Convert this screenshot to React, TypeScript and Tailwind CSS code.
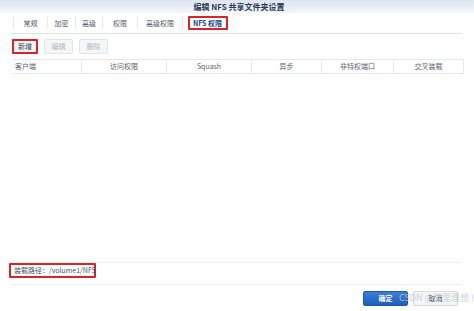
import React from 'react';

const tabs = [
  { label: '常规', w: 'w-[34px]' },
  { label: '加密', w: 'w-[28px]' },
  { label: '高级', w: 'w-[27px]' },
  { label: '权限', w: 'w-[35px]' },
  { label: '高级权限', w: 'w-[45px]' },
];

const cols = [
  { label: '客户端', w: 'w-[70px]', align: 'justify-start pl-[3px]' },
  { label: '访问权限', w: 'w-[85px]', align: 'justify-center' },
  { label: 'Squash', w: 'w-[85px]', align: 'justify-center' },
  { label: '异步', w: 'w-[70px]', align: 'justify-center' },
  { label: '非特权端口', w: 'w-[72px]', align: 'justify-center' },
  { label: '交叉装载', w: 'w-[70px]', align: 'justify-center' },
];

export default function App() {
  return (
    <div
      className="relative w-[474px] h-[311px] bg-white overflow-hidden flex flex-col"
      style={{ fontFamily: '"Noto Sans CJK SC", "Noto Sans", sans-serif' }}
    >
      {/* TITLE */}
      <div className="h-[13px] bg-gradient-to-b from-[#dde5ee] to-[#f3f6f9] flex items-center justify-center">
        <span className="text-[8px] font-bold text-[#2b3b58] leading-none ml-[4px]">编辑 NFS 共享文件夹设置</span>
      </div>

      {/* TABS */}
      <div className="ml-[10px] mr-[12px] h-[21px] border-b border-[#dfe2e7] flex items-center">
        <div className="w-[3px]" />
        {tabs.map(t => (
          <div key={t.label} className={`${t.w} h-[12px] border-l border-[#e6e8ec] flex items-center justify-center text-[7px] text-[#50596a]`}>
            {t.label}
          </div>
        ))}
        <div className="w-[50px] h-[14px] border-l border-[#e6e8ec] flex items-center justify-center">
          <div className="w-[40px] h-[14px] border-2 border-[#d6242c] rounded-[1px] flex items-center justify-center text-[7px] font-bold text-[#1d3f8a]">
            NFS 权限
          </div>
        </div>
      </div>

      {/* BUTTONS */}
      <div className="ml-[12px] mt-[5px] flex items-center gap-[6px]">
        <div className="w-[26px] h-[15px] border-2 border-[#d6242c] rounded-[1px] bg-[#f3f4f6] flex items-center justify-center text-[7px] text-[#3b4352]">
          新增
        </div>
        <div className="w-[29px] h-[15px] border border-[#e2e4e8] rounded-[2px] bg-[#f5f6f8] flex items-center justify-center text-[7px] text-[#b3b8c2]">
          编辑
        </div>
        <div className="w-[29px] h-[15px] border border-[#e2e4e8] rounded-[2px] bg-[#f5f6f8] flex items-center justify-center text-[7px] text-[#b3b8c2]">
          删除
        </div>
      </div>

      {/* TABLE HEADER */}
      <div className="ml-[12px] mr-[10px] mt-[5px] h-[15px] border-y border-[#e6e8ec] flex">
        {cols.map(c => (
          <div key={c.label} className={`${c.w} h-full border-r border-[#e6e8ec] flex items-center ${c.align} text-[7px] text-[#5a6272]`}>
            {c.label}
          </div>
        ))}
      </div>

      <div className="flex-1" />

      {/* PATH */}
      <div className="ml-[10px] mr-[12px] h-[23px] border-y border-[#eef0f3] flex items-start">
        <div className="ml-[-1px] h-[15px] w-[87px] border-2 border-[#d6242c] rounded-[1px] flex items-center pl-[3px] text-[7px] text-[#4a5262] whitespace-nowrap">
          装载路径：/volume1/NFS
        </div>
      </div>

      {/* FOOTER */}
      <div className="h-[26px] flex items-start justify-end pr-[16px] pt-[6px] gap-[5px]">
        <div className="w-[45px] h-[15px] rounded-[2px] bg-gradient-to-b from-[#3b7fd4] to-[#1f5fb8] border border-[#1f58a8] flex items-center justify-center text-[7px] text-white font-bold">
          确定
        </div>
        <div className="w-[45px] h-[15px] rounded-[2px] bg-[#f4f5f7] border border-[#d6d9de] flex items-center justify-center text-[7px] text-[#3b4352]">
          取消
        </div>
      </div>

      {/* WATERMARK */}
      <div className="absolute left-[399px] top-[293px] text-[9px] text-[#c4c8ce] opacity-80 whitespace-nowrap leading-none">
        CSDN @梦里理想 !
      </div>
    </div>
  );
}
